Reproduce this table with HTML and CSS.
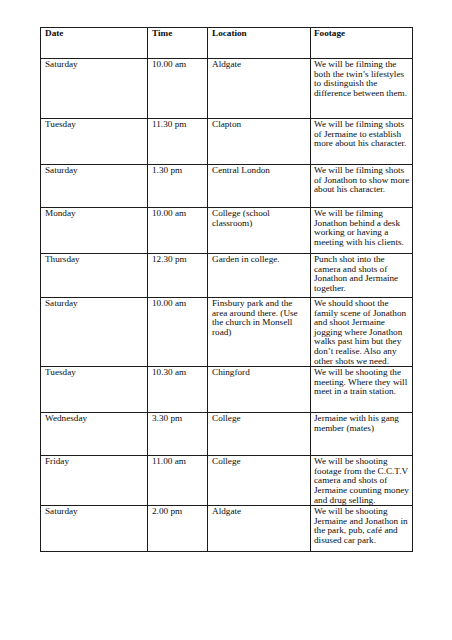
FILE: index.html
```html
<!DOCTYPE html>
<html>
<head>
<meta charset="utf-8">
<link rel="stylesheet" href="styles.css">
</head>
<body>
<div class="page">
<table class="schedule">
  <colgroup>
    <col class="c-date"><col class="c-time"><col class="c-loc"><col class="c-foot">
  </colgroup>
  <thead>
    <tr class="r0"><th>Date</th><th>Time</th><th>Location</th><th>Footage</th></tr>
  </thead>
  <tbody>
    <tr class="r1"><td>Saturday</td><td>10.00 am</td><td>Aldgate</td><td>We will be filming the<br>both the twin’s lifestyles<br>to distinguish the<br>difference between them.</td></tr>
    <tr class="r2"><td>Tuesday</td><td>11.30 pm</td><td>Clapton</td><td>We will be filming shots<br>of Jermaine to establish<br>more about his character.</td></tr>
    <tr class="r3"><td>Saturday</td><td>1.30 pm</td><td>Central London</td><td>We will be filming shots<br>of Jonathon to show more<br>about his character.</td></tr>
    <tr class="r4"><td>Monday</td><td>10.00 am</td><td>College (school<br>classroom)</td><td>We will be filming<br>Jonathon behind a desk<br>working or having a<br>meeting with his clients.</td></tr>
    <tr class="r5"><td>Thursday</td><td>12.30 pm</td><td>Garden in college.</td><td>Punch shot into the<br>camera and shots of<br>Jonathon and Jermaine<br>together.</td></tr>
    <tr class="r6"><td>Saturday</td><td>10.00 am</td><td>Finsbury park and the<br>area around there. (Use<br>the church in Monsell<br>road)</td><td>We should shoot the<br>family scene of Jonathon<br>and shoot Jermaine<br>jogging where Jonathon<br>walks past him but they<br>don’t realise. Also any<br>other shots we need.</td></tr>
    <tr class="r7"><td>Tuesday</td><td>10.30 am</td><td>Chingford</td><td>We will be shooting the<br>meeting. Where they will<br>meet in a train station.</td></tr>
    <tr class="r8"><td>Wednesday</td><td>3.30 pm</td><td>College</td><td>Jermaine with his gang<br>member (mates)</td></tr>
    <tr class="r9"><td>Friday</td><td>11.00 am</td><td>College</td><td>We will be shooting<br>footage from the C.C.T.V<br>camera and shots of<br>Jermaine counting money<br>and drug selling.</td></tr>
    <tr class="r10"><td>Saturday</td><td>2.00 pm</td><td>Aldgate</td><td>We will be shooting<br>Jermaine and Jonathon in<br>the park, pub, café and<br>disused car park.</td></tr>
  </tbody>
</table>
</div>
</body>
</html>
```
FILE: styles.css
```css
html, body {
  margin: 0;
  padding: 0;
  background: #ffffff;
}
.page {
  padding: 27px 0 0 40px;
}
.schedule {
  border-collapse: collapse;
  table-layout: fixed;
  width: 372px;
  font-family: "Liberation Serif", "DejaVu Serif", serif;
  font-size: 9.2px;
  line-height: 9.6px;
  color: #0d0d0d;
}
.c-date { width: 107px; }
.c-time { width: 60px; }
.c-loc { width: 103px; }
.c-foot { width: 102px; }
.schedule th,
.schedule td {
  border: 1px solid #1c1c1c;
  padding: 1px 2px 0 4px;
  vertical-align: top;
  text-align: left;
  white-space: nowrap;
  overflow: hidden;
}
.schedule td:nth-child(4),
.schedule th:nth-child(4) {
  padding-left: 3px;
}
.schedule th {
  font-weight: bold;
}
.r0 { height: 31px; }
.r1 { height: 60px; }
.r2 { height: 46px; }
.r3 { height: 43px; }
.r4 { height: 46px; }
.r5 { height: 44px; }
.r6 { height: 69px; }
.r7 { height: 46px; }
.r8 { height: 43px; }
.r9 { height: 50px; }
.r10 { height: 46px; }
```
